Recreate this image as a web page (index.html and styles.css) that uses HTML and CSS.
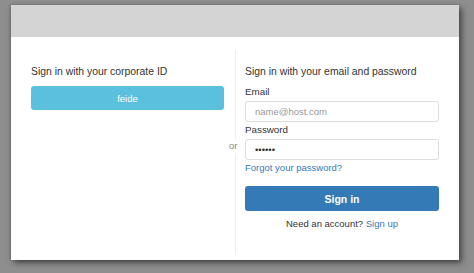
FILE: index.html
```html
<html>
    <head>
        <meta charset="utf-8" />
        <title>Sign in</title>
        <link rel="stylesheet" href="styles.css">
    </head>
    <body>
        <div class="modal">
            <div class="modal-header"></div>
            <div class="modal-body">
                <div class="col col-left">
                    <h4>Sign in with your corporate ID</h4>
                    <button class="btn btn-idp">feide</button>
                </div>
                <div class="col col-right">
                    <span class="or">or</span>
                    <h4>Sign in with your email and password</h4>
                    <label class="lbl">Email</label>
                    <input class="field" type="text" placeholder="name@host.com">
                    <label class="lbl lbl-pw">Password</label>
                    <input class="field" type="password" value="secret">
                    <a class="link forgot" href="#">Forgot your password?</a>
                    <button class="btn btn-primary">Sign in</button>
                    <p class="signup">Need an account? <a class="link" href="#">Sign up</a></p>
                </div>
            </div>
        </div>
    </body>
</html>
```

FILE: styles.css
```css
body {
    margin: 0;
    background-color: #8e8e8e;
    font-family: "Liberation Sans", Arial, sans-serif;
    color: #333;
}
.modal {
    margin: 5px 0 0 11px;
    width: 448px;
    height: 255px;
    background-color: #fff;
    box-shadow: 3px 3px 6px rgba(0, 0, 0, 0.5), -1px 0 3px rgba(0, 0, 0, 0.2);
}
.modal-header {
    height: 32px;
    background-color: #d4d4d4;
}
.modal-body {
    display: flex;
    padding-top: 13px;
}
.col {
    height: 205px;
    box-sizing: border-box;
    padding-top: 15px;
}
.col-left {
    width: 224px;
    padding-left: 20px;
    padding-right: 11px;
}
.col-right {
    position: relative;
    width: 224px;
    padding-left: 9px;
    padding-right: 20px;
    border-left: solid 1px #eee;
    display: flex;
    flex-direction: column;
}
h4 {
    margin: 0;
    font-size: 10.4px;
    line-height: 13px;
    font-weight: normal;
}
.btn {
    display: block;
    width: 100%;
    border: none;
    border-radius: 3px;
    color: #fff;
    font-family: inherit;
    padding: 0;
}
.btn-idp {
    margin-top: 8px;
    height: 24px;
    background-color: #5bc0de;
    font-size: 9.5px;
}
.btn-primary {
    margin-top: 12px;
    height: 25px;
    background-color: #337ab7;
    font-size: 10.5px;
    font-weight: bold;
}
.lbl {
    margin-top: 8px;
    font-size: 9.8px;
    line-height: 12px;
}
.lbl-pw {
    margin-top: 2px;
}
.field {
    margin-top: 3px;
    height: 21px;
    box-sizing: border-box;
    border: solid 1px #ddd;
    border-radius: 3px;
    padding: 0 9px;
    font-family: inherit;
    font-size: 9.5px;
    color: #333;
}
.field::placeholder {
    color: #999;
}
.link {
    color: #337ab7;
    text-decoration: none;
}
.forgot {
    margin-top: 2px;
    font-size: 9.5px;
    line-height: 12px;
}
.signup {
    margin: 7px 0 0;
    font-size: 9.5px;
    line-height: 12px;
    text-align: center;
}
.or {
    position: absolute;
    left: -7px;
    top: 89px;
    background-color: #fff;
    font-size: 9.5px;
    line-height: 14px;
    color: #888;
}
```
